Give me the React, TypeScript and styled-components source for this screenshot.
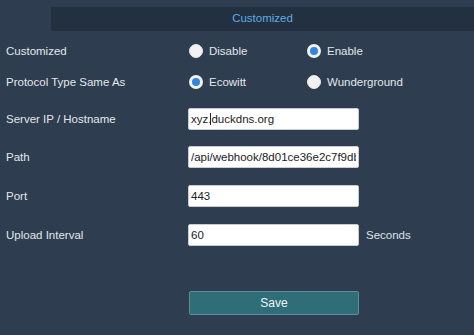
import React from 'react';
import styled, { createGlobalStyle } from 'styled-components';

const GlobalStyle = createGlobalStyle`
  html, body {
    margin: 0;
    padding: 0;
    background: #2e3d4f;
  }
  body {
    font-family: "Liberation Sans", Arial, sans-serif;
    font-size: 11.5px;
    color: #e3e7eb;
  }
`;

const Page = styled.div`
  width: 474px;
  height: 335px;
  background: #2e3d4f;
  padding-top: 7px;
  box-sizing: border-box;
  overflow: hidden;
`;

const SectionTitle = styled.div`
  margin-left: 51px;
  height: 24px;
  background: #223040;
  color: #5aaee6;
  font-size: 11.5px;
  display: flex;
  align-items: center;
  justify-content: center;
  padding-bottom: 2px;
  box-sizing: border-box;
`;

const Form = styled.div`
  display: flex;
  flex-direction: column;
  padding-top: 8px;
`;

const Row = styled.div<{ $height: number }>`
  display: flex;
  align-items: center;
  height: ${(p) => p.$height}px;
  padding-left: 6px;
`;

const Label = styled.div`
  width: 182px;
  flex-shrink: 0;
`;

const RadioOption = styled.label`
  display: flex;
  align-items: center;
  width: 118px;
  gap: 6px;
  cursor: pointer;
`;

const RadioDot = styled.span<{ $checked?: boolean }>`
  width: 14px;
  height: 14px;
  border-radius: 50%;
  box-sizing: border-box;
  background: ${(p) => (p.$checked ? '#2f86dd' : '#f2f2f2')};
  border: ${(p) => (p.$checked ? '3.5px solid #f2f2f2' : '1px solid #e8e8e8')};
  margin-left: 1px;
`;

const Field = styled.div`
  position: relative;
  display: flex;
`;

const TextInput = styled.input`
  width: 171px;
  height: 22px;
  box-sizing: border-box;
  border: 1px solid #c8ccd0;
  border-radius: 2px;
  background: #ffffff;
  color: #222;
  font-family: "Liberation Sans", Arial, sans-serif;
  font-size: 11.5px;
  padding: 0 2px;
  outline: none;
`;

const Caret = styled.span`
  position: absolute;
  left: 22px;
  top: 5px;
  width: 1px;
  height: 12px;
  background: #222;
`;

const Unit = styled.span`
  margin-left: 7px;
  color: #dde2e7;
`;

const SaveButton = styled.button`
  width: 170px;
  height: 24px;
  margin-left: 183px;
  margin-top: 36px;
  background: #2f6e79;
  border: 1px solid #5b8f97;
  border-radius: 2px;
  color: #eef3f5;
  font-family: "Liberation Sans", Arial, sans-serif;
  font-size: 12px;
  cursor: pointer;
`;

function Radio(props: { label: string; checked?: boolean }) {
  return (
    <RadioOption>
      <RadioDot $checked={props.checked} />
      {props.label}
    </RadioOption>
  );
}

export default function App() {
  return (
    <Page>
      <GlobalStyle />
      <SectionTitle>Customized</SectionTitle>
      <Form>
        <Row $height={24}>
          <Label>Customized</Label>
          <Radio label="Disable" />
          <Radio label="Enable" checked />
        </Row>
        <Row $height={37}>
          <Label>Protocol Type Same As</Label>
          <Radio label="Ecowitt" checked />
          <Radio label="Wunderground" />
        </Row>
        <Row $height={37}>
          <Label>Server IP / Hostname</Label>
          <Field>
            <TextInput defaultValue="xyz.duckdns.org" />
            <Caret />
          </Field>
        </Row>
        <Row $height={40}>
          <Label>Path</Label>
          <Field>
            <TextInput defaultValue="/api/webhook/8d01ce36e2c7f9db48" />
          </Field>
        </Row>
        <Row $height={38}>
          <Label>Port</Label>
          <Field>
            <TextInput defaultValue="443" />
          </Field>
        </Row>
        <Row $height={40}>
          <Label>Upload Interval</Label>
          <Field>
            <TextInput defaultValue="60" />
          </Field>
          <Unit>Seconds</Unit>
        </Row>
        <Row $height={60}>
          <SaveButton>Save</SaveButton>
        </Row>
      </Form>
    </Page>
  );
}
